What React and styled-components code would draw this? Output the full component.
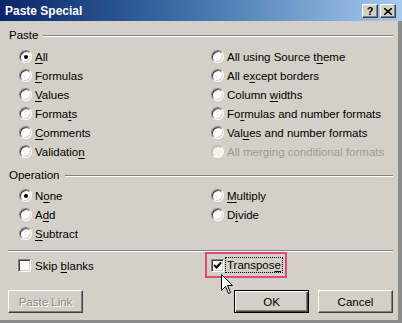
import React from "react";
import styled, { createGlobalStyle } from "styled-components";

const GlobalStyle = createGlobalStyle`
  html, body {
    margin: 0;
    padding: 0;
    background: #d4d0c8;
  }
  body {
    font-family: "Liberation Sans", Arial, sans-serif;
  }
`;

const pasteLeft = [
  { label: "All", key: 0, checked: true },
  { label: "Formulas", key: 0 },
  { label: "Values", key: 0 },
  { label: "Formats", key: 5 },
  { label: "Comments", key: 0 },
  { label: "Validation", key: 9 },
];

const pasteRight = [
  { label: "All using Source theme", key: 18 },
  { label: "All except borders", key: 5 },
  { label: "Column widths", key: 7 },
  { label: "Formulas and number formats", key: 2 },
  { label: "Values and number formats", key: 3 },
  { label: "All merging conditional formats", key: -1, disabled: true },
];

const opLeft = [
  { label: "None", key: 1, checked: true },
  { label: "Add", key: 1 },
  { label: "Subtract", key: 0 },
];

const opRight = [
  { label: "Multiply", key: 0 },
  { label: "Divide", key: 1 },
];

const Mnemonic = ({ text, at }) => {
  if (at < 0) return text;
  return (
    <>
      {text.slice(0, at)}
      <u>{text[at]}</u>
      {text.slice(at + 1)}
    </>
  );
};

const Radio = ({ item }) => (
  <OptionRow $disabled={item.disabled}>
    <RadioCircle $checked={item.checked} $disabled={item.disabled} />
    <OptionText>
      <Mnemonic text={item.label} at={item.key} />
    </OptionText>
  </OptionRow>
);

const Column = ({ items }) => (
  <OptionColumn>
    {items.map((it) => (
      <Radio key={it.label} item={it} />
    ))}
  </OptionColumn>
);

const Cursor = () => (
  <CursorWrap>
    <svg width="13" height="21" viewBox="0 0 13 21">
      <path
        d="M0.5 0.5 L0.5 16.5 L4.5 12.5 L7.5 19.5 L9.5 18.5 L6.5 11.5 L11.5 11.5 Z"
        fill="#fff"
        stroke="#000"
        strokeWidth="1"
        strokeLinejoin="miter"
      />
    </svg>
  </CursorWrap>
);

const CheckMark = () => (
  <svg width="9" height="9" viewBox="0 0 9 9">
    <path d="M1 4 L3.5 6.5 L8 1.5" fill="none" stroke="#000" strokeWidth="2" />
  </svg>
);

export default function App() {
  return (
    <Window>
      <GlobalStyle />
      <TitleBar>
        <Title>Paste Special</Title>
        <TitleButtons>
          <TitleButton>?</TitleButton>
          <TitleButton>
            <svg width="8" height="7" viewBox="0 0 8 7">
              <path d="M0 0 L8 7 M8 0 L0 7" stroke="#000" strokeWidth="1.6" />
            </svg>
          </TitleButton>
        </TitleButtons>
      </TitleBar>
      <Body>
        <GroupHeader>
          <GroupLabel>Paste</GroupLabel>
          <Rule />
        </GroupHeader>
        <OptionGrid>
          <Column items={pasteLeft} />
          <Column items={pasteRight} />
        </OptionGrid>

        <GroupHeader $gap={7}>
          <GroupLabel>Operation</GroupLabel>
          <Rule />
        </GroupHeader>
        <OptionGrid $gap={4}>
          <Column items={opLeft} />
          <Column items={opRight} />
        </OptionGrid>

        <Separator />

        <CheckRow>
          <CheckItem>
            <CheckBox />
            <OptionText>
              <Mnemonic text="Skip blanks" at={5} />
            </OptionText>
          </CheckItem>
          <Highlight>
            <CheckBox>
              <CheckMark />
            </CheckBox>
            <FocusText>
              <Mnemonic text="Transpose" at={8} />
            </FocusText>
          </Highlight>
        </CheckRow>

        <ButtonRow>
          <Button disabled>Paste Link</Button>
          <Spacer />
          <Button $default>OK</Button>
          <Button>Cancel</Button>
        </ButtonRow>
      </Body>
      <Cursor />
    </Window>
  );
}

const Window = styled.div`
  position: relative;
  width: 402px;
  height: 323px;
  background: #d4d0c8;
  display: flex;
  flex-direction: column;
  overflow: hidden;
  color: #000;
  font-size: 11.5px;
`;

const TitleBar = styled.div`
  height: 21px;
  flex: none;
  display: flex;
  align-items: center;
  justify-content: space-between;
  padding: 0 6px 0 5px;
  background: linear-gradient(to right, #0a246a 0%, #3a6ea5 45%, #a6caf0 100%);
`;

const Title = styled.div`
  color: #fff;
  font-weight: bold;
  font-size: 12px;
  letter-spacing: 0;
`;

const TitleButtons = styled.div`
  display: flex;
  gap: 2px;
  margin-top: 1px;
`;

const TitleButton = styled.div`
  width: 16px;
  height: 14px;
  box-sizing: border-box;
  background: #d4d0c8;
  border: 1px solid;
  border-color: #fff #404040 #404040 #fff;
  box-shadow: inset -1px -1px #808080;
  display: flex;
  align-items: center;
  justify-content: center;
  font-weight: bold;
  font-size: 11px;
  line-height: 1;
`;

const Body = styled.div`
  flex: 1;
  display: flex;
  flex-direction: column;
  padding: 0 5px 0 8px;
  border-right: 4px solid #8c8c8c;
  border-bottom: 3px solid #8c8c8c;
`;

const GroupHeader = styled.div`
  display: flex;
  align-items: center;
  gap: 5px;
  height: 14px;
  margin-top: ${(p) => p.$gap ?? 7}px;
  padding-left: 1px;
`;

const GroupLabel = styled.span`
  line-height: 14px;
`;

const Rule = styled.div`
  flex: 1;
  height: 0;
  border-top: 1px solid #808080;
  border-bottom: 1px solid #fff;
  margin-top: 1px;
`;

const Separator = styled.div`
  height: 0;
  border-top: 1px solid #808080;
  border-bottom: 1px solid #fff;
  margin-top: 7px;
`;

const OptionGrid = styled.div`
  display: grid;
  grid-template-columns: 192px 1fr;
  padding-left: 11px;
  margin-top: ${(p) => p.$gap ?? 5}px;
`;

const OptionColumn = styled.div`
  display: flex;
  flex-direction: column;
`;

const OptionRow = styled.div`
  height: 19px;
  display: flex;
  align-items: center;
  gap: 3px;
  color: ${(p) => (p.$disabled ? "#a09c94" : "#000")};
  white-space: nowrap;
`;

const OptionText = styled.span`
  line-height: 14px;
  u {
    text-decoration-thickness: 1px;
    text-underline-offset: 2px;
  }
`;

const RadioCircle = styled.span`
  position: relative;
  flex: none;
  width: 13px;
  height: 13px;
  box-sizing: border-box;
  border-radius: 50%;
  background: ${(p) => (p.$disabled ? "#f4f3f0" : "#fff")};
  border: 1px solid;
  border-color: ${(p) =>
    p.$disabled ? "#b8b4ac #fff #fff #b8b4ac" : "#808080 #fff #fff #808080"};
  box-shadow: ${(p) =>
    p.$disabled
      ? "inset 1px 1px #c8c4bc"
      : "inset 1px 1px #404040, inset -1px -1px #d4d0c8"};
  &::after {
    content: "";
    display: ${(p) => (p.$checked ? "block" : "none")};
    position: absolute;
    left: 3.5px;
    top: 3.5px;
    width: 4px;
    height: 4px;
    border-radius: 50%;
    background: #000;
  }
`;

const CheckRow = styled.div`
  display: grid;
  grid-template-columns: 187px auto;
  align-items: center;
  justify-items: start;
  padding-left: 10px;
  height: 26px;
  margin-top: 0;
`;

const CheckItem = styled.div`
  display: flex;
  align-items: center;
  gap: 4px;
  margin-top: 1px;
`;

const CheckBox = styled.span`
  flex: none;
  width: 13px;
  height: 13px;
  box-sizing: border-box;
  background: #fff;
  border: 1px solid;
  border-color: #808080 #fff #fff #808080;
  box-shadow: inset 1px 1px #404040, inset -1px -1px #d4d0c8;
  display: flex;
  align-items: center;
  justify-content: center;
`;

const Highlight = styled.div`
  box-sizing: border-box;
  height: 26px;
  width: 82px;
  display: flex;
  align-items: center;
  gap: 2px;
  padding-left: 4px;
  border: 2px solid #dc4a78;
`;

const FocusText = styled.span`
  line-height: 14px;
  padding: 0 1px;
  outline: 1px dotted #000;
  outline-offset: 0;
  u {
    text-underline-offset: 2px;
  }
`;

const ButtonRow = styled.div`
  display: flex;
  gap: 9px;
  margin-top: 12px;
`;

const Spacer = styled.div`
  flex: 1;
`;

const Button = styled.button`
  width: 75px;
  height: 23px;
  box-sizing: border-box;
  padding: 0;
  font-family: "Liberation Sans", Arial, sans-serif;
  font-size: 11.5px;
  color: #000;
  background: #d4d0c8;
  border: 1px solid;
  border-color: ${(p) => (p.$default ? "#000" : "#fff #404040 #404040 #fff")};
  box-shadow: ${(p) =>
    p.$default
      ? "inset 1px 1px #fff, inset -1px -1px #404040, inset -2px -2px #808080"
      : "inset -1px -1px #808080"};
  &:disabled {
    color: #8c8a84;
    text-shadow: 1px 1px #fff;
  }
`;

const CursorWrap = styled.div`
  position: absolute;
  left: 221px;
  top: 274px;
  width: 13px;
  height: 21px;
  pointer-events: none;
`;
